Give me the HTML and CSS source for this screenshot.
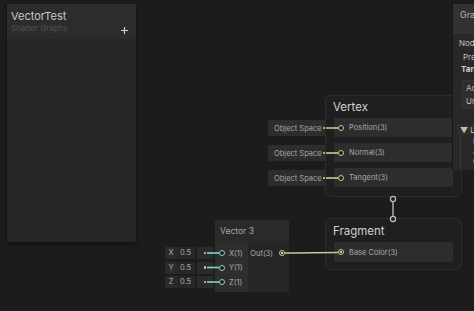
FILE: index.html
```html
<!DOCTYPE html>
<html>
<head>
<meta charset="utf-8">
<link rel="stylesheet" href="styles.css">
</head>
<body>
<div class="canvas">

  <div class="blackboard">
    <div class="bb-head">
      <div class="bb-titles">
        <div class="bb-title">VectorTest</div>
        <div class="bb-sub">Shader Graphs</div>
      </div>
      <div class="bb-plus"><svg width="7" height="7" viewBox="0 0 7 7"><path d="M3.5 0V7M0 3.5H7" stroke="#cfcfcf" stroke-width="1.2"/></svg></div>
    </div>
    <div class="bb-body"></div>
  </div>

  <div class="vertex-inputs">
    <div class="obj-field"><span>Object Space</span><i class="dot yellow"></i></div>
    <div class="obj-field"><span>Object Space</span><i class="dot yellow"></i></div>
    <div class="obj-field"><span>Object Space</span><i class="dot yellow"></i></div>
  </div>

  <div class="context vertex">
    <div class="ctx-title">Vertex</div>
    <div class="ctx-rows">
      <div class="block"><i class="port yellow"></i><span>Position(3)</span></div>
      <div class="block"><i class="port yellow"></i><span>Normal(3)</span></div>
      <div class="block"><i class="port yellow"></i><span>Tangent(3)</span></div>
    </div>
  </div>

  <div class="context fragment">
    <div class="ctx-title">Fragment</div>
    <div class="ctx-rows">
      <div class="block"><i class="port yellow filled"></i><span>Base Color(3)</span></div>
    </div>
  </div>

  <div class="v3-inputs">
    <div class="float-field"><div class="ff-box"><span class="ff-label">X</span><span class="ff-value">0.5</span></div><div class="ff-dot"><i class="dot teal"></i></div></div>
    <div class="float-field"><div class="ff-box"><span class="ff-label">Y</span><span class="ff-value">0.5</span></div><div class="ff-dot"><i class="dot teal"></i></div></div>
    <div class="float-field"><div class="ff-box"><span class="ff-label">Z</span><span class="ff-value">0.5</span></div><div class="ff-dot"><i class="dot teal"></i></div></div>
  </div>

  <div class="node v3">
    <div class="node-title">Vector 3</div>
    <div class="node-body">
      <div class="node-in">
        <div class="prow"><i class="port teal"></i><span>X(1)</span></div>
        <div class="prow"><i class="port teal"></i><span>Y(1)</span></div>
        <div class="prow"><i class="port teal"></i><span>Z(1)</span></div>
      </div>
      <div class="node-out">
        <div class="prow out"><span>Out(3)</span><i class="port yellow filled"></i></div>
      </div>
    </div>
  </div>

  <svg class="edges" width="474" height="311" viewBox="0 0 474 311">
    <path d="M285 253 C 310 253, 315 252.5, 338 252.5" stroke="#c9c98e" stroke-width="1.6" fill="none"/>
    <line x1="326" y1="128" x2="338" y2="128" stroke="#c9c98e" stroke-width="1.6"/>
    <line x1="326" y1="153" x2="338" y2="153" stroke="#c9c98e" stroke-width="1.6"/>
    <line x1="326" y1="178" x2="338" y2="178" stroke="#c9c98e" stroke-width="1.6"/>
    <line x1="207" y1="253" x2="219" y2="253" stroke="#8ccfcc" stroke-width="1.6"/>
    <line x1="207" y1="267.5" x2="219" y2="267.5" stroke="#8ccfcc" stroke-width="1.6"/>
    <line x1="207" y1="282" x2="219" y2="282" stroke="#8ccfcc" stroke-width="1.6"/>
    <line x1="393" y1="201.5" x2="393" y2="216.5" stroke="#b4b4b4" stroke-width="1.4"/>
    <circle cx="393" cy="199" r="2.6" fill="#1e1e1e" stroke="#c0c0c0" stroke-width="1.2"/>
    <circle cx="393" cy="219" r="2.6" fill="#1e1e1e" stroke="#c0c0c0" stroke-width="1.2"/>
  </svg>

  <div class="inspector">
    <div class="ins-head">Graph Inspector</div>
    <div class="ins-body">
      <div class="ins-tab">Node Settings</div>
      <div class="ins-item">Precision</div>
      <div class="ins-item strong">Target Settings</div>
      <div class="ins-box">
        <div>Active Targets</div>
        <div>Universal</div>
      </div>
      <div class="ins-fold">&#9660; Lit</div>
      <div class="ins-sub">
        <div>Material</div>
        <div>Allow</div>
        <div>Override</div>
      </div>
    </div>
  </div>

</div>
</body>
</html>
```

FILE: styles.css
```css
html, body {
  margin: 0;
  padding: 0;
}
body {
  width: 474px;
  height: 311px;
  overflow: hidden;
  background: #1c1c1c;
  font-family: Inter, "Noto Sans", sans-serif;
}
.canvas {
  position: relative;
  width: 474px;
  height: 311px;
  overflow: hidden;
  background: #1c1c1c;
}

/* Blackboard */
.blackboard {
  position: absolute;
  left: 7px;
  top: 4px;
  width: 129px;
  height: 238px;
  display: flex;
  flex-direction: column;
  background: #262626;
  box-shadow: 0 2px 3px rgba(0,0,0,0.45), -1px 0 0 #171717;
}
.bb-head {
  height: 35px;
  box-sizing: border-box;
  background: #2c2c2c;
  display: flex;
  align-items: flex-start;
  justify-content: space-between;
  padding: 6px 8px 0 4px;
}
.bb-title {
  font-size: 11px;
  line-height: 13px;
  color: #c8c8c8;
}
.bb-sub {
  font-size: 8px;
  line-height: 10px;
  color: #505050;
}
.bb-plus {
  margin-top: 17px;
  display: flex;
}
.bb-body {
  flex: 1;
}

/* Ports */
.port {
  display: block;
  width: 6px;
  height: 6px;
  box-sizing: border-box;
  border-radius: 50%;
  border: 1.3px solid #c9c98e;
  background: #1e1e1e;
  flex: none;
}
.port.teal { border-color: #8ccfcc; }
.port.filled {
  background: radial-gradient(circle, #c9c98e 0 1.4px, #1e1e1e 1.6px);
}
.dot {
  display: block;
  width: 2.5px;
  height: 2.5px;
  border-radius: 50%;
  background: #d4d4a0;
}
.dot.teal { background: #a8dcdc; }

/* Object space inputs */
.vertex-inputs {
  position: absolute;
  left: 268px;
  top: 120px;
  display: flex;
  flex-direction: column;
  gap: 9px;
}
.obj-field {
  width: 62px;
  height: 16px;
  box-sizing: border-box;
  background: #2d2d2d;
  display: flex;
  align-items: center;
  justify-content: space-between;
  padding: 0 5px 0 6px;
  font-size: 7.5px;
  color: #a6a6a6;
}

/* Contexts */
.context {
  position: absolute;
  left: 325px;
  width: 137px;
  box-sizing: border-box;
  border: 1px solid #2d2d2d;
  border-radius: 6px;
  background: #1f1f1f;
  padding: 0 8px;
}
.vertex { top: 95px; padding-bottom: 9px; }
.fragment { top: 218px; padding-bottom: 7px; }
.ctx-title {
  height: 22px;
  line-height: 23px;
  font-size: 11.5px;
  color: #cfcfcf;
  margin-left: -1px;
}
.fragment .ctx-title { height: 23px; line-height: 25px; }
.ctx-rows {
  display: flex;
  flex-direction: column;
  gap: 6px;
}
.block {
  height: 19px;
  background: #2d2d2d;
  display: flex;
  align-items: center;
  gap: 5px;
  padding-left: 4px;
  font-size: 7.5px;
  color: #a9a9a9;
}
.fragment .block { height: 20px; }

/* Vector 3 inputs */
.v3-inputs {
  position: absolute;
  left: 165px;
  top: 247px;
  display: flex;
  flex-direction: column;
  gap: 2.5px;
}
.float-field {
  display: flex;
  gap: 2px;
  height: 12px;
}
.ff-box {
  width: 30px;
  display: flex;
  background: #2b2b2b;
  font-size: 7.5px;
  color: #a8a8a8;
}
.ff-label {
  width: 12px;
  text-align: center;
  line-height: 12px;
}
.ff-value {
  flex: 1;
  background: #262626;
  line-height: 12px;
  padding-left: 3px;
}
.ff-dot {
  width: 16px;
  background: #2b2b2b;
  display: flex;
  align-items: center;
  justify-content: center;
}

/* Node */
.node {
  position: absolute;
  display: flex;
  flex-direction: column;
}
.v3 {
  left: 215px;
  top: 220px;
  width: 74px;
  height: 72px;
  background: #282828;
}
.node-title {
  height: 22px;
  line-height: 23px;
  padding-left: 5px;
  font-size: 8.5px;
  color: #a6a6a6;
  background: #2a2a2a;
}
.node-body {
  flex: 1;
  display: flex;
}
.node-in {
  width: 33px;
  background: #2e2e2e;
  padding-top: 4px;
  box-sizing: border-box;
}
.node-out {
  flex: 1;
  padding-top: 4px;
  background: #262626;
}
.prow {
  height: 14.5px;
  display: flex;
  align-items: center;
  gap: 4px;
  padding-left: 4px;
  font-size: 7.5px;
  color: #acacac;
}
.prow.out {
  justify-content: flex-end;
  padding-left: 0;
  padding-right: 4px;
  gap: 6px;
}

/* Edges */
.edges {
  position: absolute;
  left: 0;
  top: 0;
  pointer-events: none;
}

/* Inspector */
.inspector {
  position: absolute;
  left: 453px;
  top: 4px;
  width: 120px;
  height: 166px;
  background: #282828;
  box-shadow: -1px 0 0 #161616;
}
.ins-head {
  height: 30px;
  background: #323232;
  padding: 5px 0 0 7px;
  box-sizing: border-box;
  font-size: 9px;
  color: #b4b4b4;
}
.ins-body {
  padding: 3px 0 0 7px;
  font-size: 8px;
  color: #c4c4c4;
  white-space: nowrap;
}
.ins-tab {
  line-height: 12px;
  margin-left: -1px;
  margin-bottom: 2px;
}
.ins-item {
  line-height: 12px;
  padding-left: 3px;
  color: #bdbdbd;
}
.ins-item.strong {
  padding-left: 1px;
  font-weight: 700;
  color: #d0d0d0;
}
.ins-box {
  margin: 5px 0 0 2px;
  height: 29px;
  box-sizing: border-box;
  background: #2f2f2f;
  border: 1px solid #353535;
  padding: 0 0 0 3px;
  display: flex;
  flex-direction: column;
  justify-content: space-around;
  color: #bdbdbd;
}
.ins-fold {
  margin-top: 16px;
  margin-left: -3px;
  padding-left: 3px;
  height: 10px;
  line-height: 10px;
  background: #2e2e2e;
  font-size: 8px;
  color: #c0c0c0;
}
.ins-sub {
  margin-left: 0;
  padding-left: 12px;
  border-left: 1px solid #3a3a3a;
  line-height: 10px;
  font-size: 7.5px;
  color: #bdbdbd;
  padding-top: 2px;
}
```
